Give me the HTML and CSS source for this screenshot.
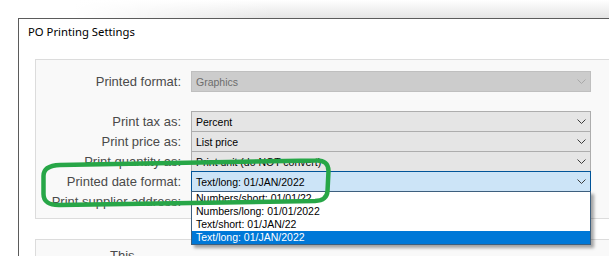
FILE: index.html
```html
<!DOCTYPE html>
<html lang="en">
<head>
    <meta charset="UTF-8">
    <meta name="viewport" content="width=device-width, initial-scale=1.0">
    <title>PO Printing Settings</title>
    <link rel="stylesheet" href="styles.css">
</head>
<body>
    <div class="top-band"></div>
    <div class="window">
        <div class="title">PO Printing Settings</div>
        <div class="panel">
            <div class="row row-single">
                <span class="label">Printed format:</span>
                <div class="combo combo-disabled">
                    <span class="value">Graphics</span>
                    <svg class="chevron" width="9" height="5" viewBox="0 0 9 5"><polyline points="0.5,0.5 4.5,4.5 8.5,0.5"/></svg>
                </div>
            </div>
            <div class="rows">
                <div class="row">
                    <span class="label">Print tax as:</span>
                    <div class="combo">
                        <span class="value">Percent</span>
                        <svg class="chevron" width="9" height="5" viewBox="0 0 9 5"><polyline points="0.5,0.5 4.5,4.5 8.5,0.5"/></svg>
                    </div>
                </div>
                <div class="row">
                    <span class="label">Print price as:</span>
                    <div class="combo">
                        <span class="value">List price</span>
                        <svg class="chevron" width="9" height="5" viewBox="0 0 9 5"><polyline points="0.5,0.5 4.5,4.5 8.5,0.5"/></svg>
                    </div>
                </div>
                <div class="row">
                    <span class="label">Print quantity as:</span>
                    <div class="combo">
                        <span class="value">Print unit (do NOT convert)</span>
                        <svg class="chevron" width="9" height="5" viewBox="0 0 9 5"><polyline points="0.5,0.5 4.5,4.5 8.5,0.5"/></svg>
                    </div>
                </div>
                <div class="row row-open">
                    <span class="label">Printed date format:</span>
                    <div class="combo combo-focus">
                        <span class="value">Text/long: 01/JAN/2022</span>
                        <svg class="chevron" width="9" height="5" viewBox="0 0 9 5"><polyline points="0.5,0.5 4.5,4.5 8.5,0.5"/></svg>
                        <ul class="dropdown">
                            <li>Numbers/short: 01/01/22</li>
                            <li>Numbers/long: 01/01/2022</li>
                            <li>Text/short: 01/JAN/22</li>
                            <li class="selected">Text/long: 01/JAN/2022</li>
                        </ul>
                    </div>
                </div>
                <div class="row">
                    <span class="label">Print supplier address:</span>
                    <div class="combo">
                        <span class="value"></span>
                        <svg class="chevron" width="9" height="5" viewBox="0 0 9 5"><polyline points="0.5,0.5 4.5,4.5 8.5,0.5"/></svg>
                    </div>
                </div>
            </div>
        </div>
        <div class="panel panel-second">
            <p class="note">This</p>
        </div>
    </div>
    <!-- hand drawn highlight round the date format row -->
    <svg class="annotation" width="609" height="256" viewBox="0 0 609 256">
        <path d="M 60 165 L 316 160.5 Q 328.5 160 328.5 171 L 327.5 191 Q 327 200.5 315 201 L 60 205 Q 43.5 205.5 43.5 194 L 43.5 176 Q 43.5 165.5 60 165 Z"/>
    </svg>
</body>
</html>
```

FILE: styles.css
```css
html, body {
    margin: 0;
    padding: 0;
}
body {
    width: 609px;
    height: 256px;
    overflow: hidden;
    background-color: #ffffff;
    font-family: "Liberation Sans", Arial, sans-serif;
    position: relative;
}
.top-band {
    height: 18px;
    background:
        linear-gradient(to right, #ffffff 12%, rgba(255, 255, 255, 0) 45%),
        linear-gradient(to bottom, #ffffff, #e4e4e4);
}
.window {
    margin-left: 18px;
    margin-right: -30px;
    height: 300px;
    border-top: 1px solid #5b5b5b;
    border-left: 1px solid #5b5b5b;
    background-color: #ffffff;
}
.title {
    font-family: "Noto Sans", sans-serif;
    font-size: 11.3px;
    color: #000000;
    height: 40px;
    line-height: 25px;
    padding-left: 9px;
}
.panel {
    margin-left: 16px;
    border: 1px solid #dcdcdc;
    border-right: none;
    background-color: #f9f9f9;
    padding: 11px 0 6px 0;
}
.row {
    display: grid;
    grid-template-columns: 145px 400px;
    column-gap: 10px;
    align-items: center;
}
.row-single {
    margin-bottom: 19px;
}
.rows .row {
    margin-bottom: -1px;
}
.rows .row:last-child {
    margin-bottom: 0;
}
.label {
    text-align: right;
    font-size: 13px;
    color: #4a4a4a;
    white-space: nowrap;
}
.combo {
    position: relative;
    box-sizing: border-box;
    height: 21px;
    display: flex;
    align-items: center;
    justify-content: space-between;
    padding: 0 4px 0 4px;
    background-color: #e5e5e5;
    border: 1px solid #adadad;
    font-size: 10.5px;
    color: #000000;
}
.combo .value {
    white-space: nowrap;
}
.chevron {
    fill: none;
    stroke: #3c3c3c;
    stroke-width: 1;
}
.combo-disabled {
    background-color: #cccccc;
    border-color: #bfbfbf;
    color: #6d6d6d;
}
.combo-disabled .chevron {
    stroke: #a8a8a8;
}
.combo-focus {
    background-color: #cce4f7;
    border-color: #005499;
    z-index: 2;
}
.row-open {
    position: relative;
    z-index: 3;
}
.dropdown {
    position: absolute;
    left: -1px;
    top: 19px;
    width: 400px;
    box-sizing: border-box;
    margin: 0;
    padding: 0;
    list-style: none;
    background-color: #ffffff;
    border: 1px solid #3d5f7e;
    box-shadow: 3px 3px 3px rgba(0, 0, 0, 0.35);
}
.dropdown li {
    height: 13px;
    line-height: 13px;
    padding-left: 4px;
    font-size: 10.5px;
    color: #000000;
    white-space: nowrap;
}
.dropdown li.selected {
    background-color: #0078d7;
    color: #ffffff;
}
.panel-second {
    margin-top: 20px;
    padding: 8px 0 0 74px;
}
.note {
    margin: 0;
    font-size: 13px;
    color: #4a4a4a;
}
.annotation {
    position: absolute;
    top: 0;
    left: 0;
    pointer-events: none;
    z-index: 10;
}
.annotation path {
    fill: none;
    stroke: #27a647;
    stroke-width: 4.5;
    stroke-linejoin: round;
}
```
